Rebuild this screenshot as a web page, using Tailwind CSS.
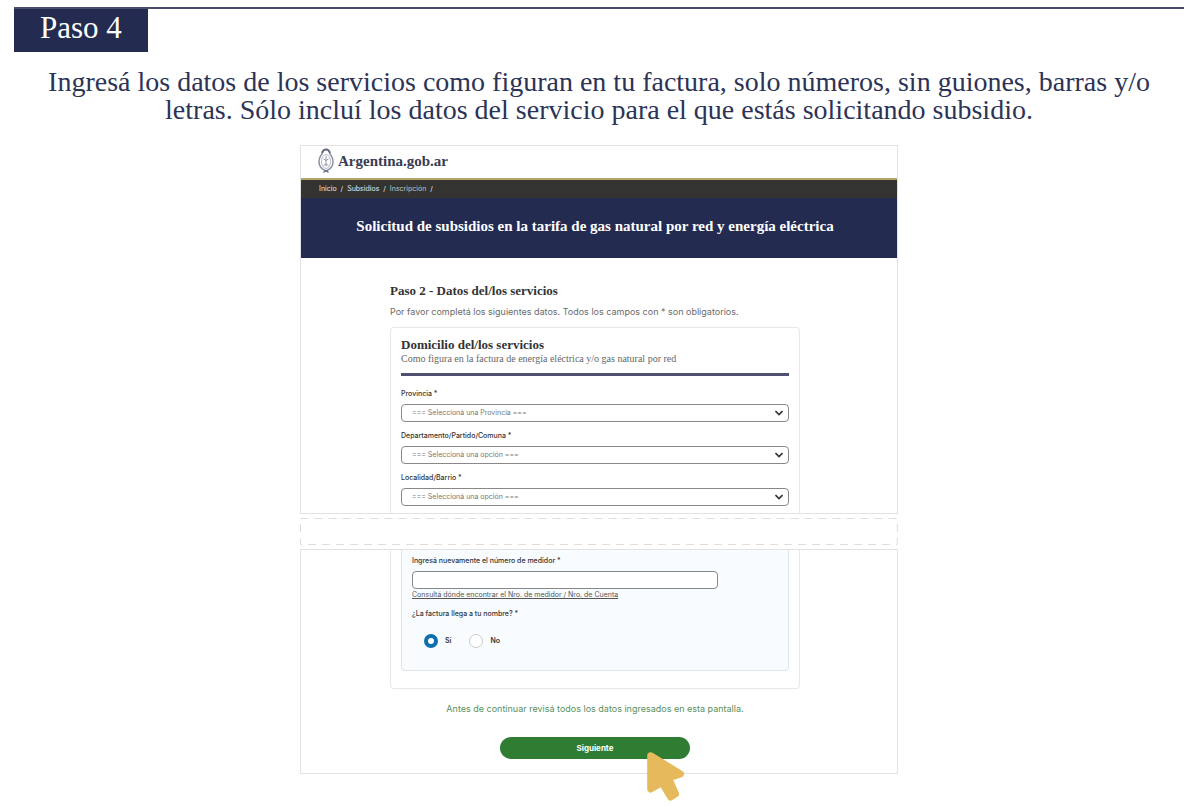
<!DOCTYPE html>
<html lang="es">
    <head>
        <meta charset="UTF-8">
        <meta name="viewport" content="width=device-width, initial-scale=1.0">
        <title>Paso 4 - Datos de los servicios</title>
        <script src="https://cdn.jsdelivr.net/npm/@tailwindcss/browser@4"></script>
    </head>
    <body class="min-h-screen bg-white pt-[7px] pb-8 pl-3.5 pr-4 font-['Inter','Open_Sans',sans-serif] text-[#333333]">

        <!-- Encabezado del paso -->
        <header class="border-t-2 border-[#4a4d6b] font-['Liberation_Serif',serif]">
            <h1 class="inline-block bg-[#232b51] px-[26px] pt-[3px] pb-2 text-[31px] leading-8 text-white align-top">Paso 4</h1>
            <p class="mt-4 text-center text-[28px] leading-7 text-[#2c3356]">
                Ingresá los datos de los servicios como figuran en tu factura, solo números, sin guiones, barras y/o<br>
                letras. Sólo incluí los datos del servicio para el que estás solicitando subsidio.
            </p>
        </header>

        <main class="mx-auto mt-[21px] max-w-[598px]">
            <form>
                <!-- Primera parte de la pantalla -->
                <section class="border border-[#e2e2e2]">
                    <div class="flex h-8 items-center gap-1 pb-0.5 pl-[17px]">
                        <svg class="h-[26px] w-4" viewBox="0 0 16 26" fill="none" stroke="#8b8fa6">
                            <path d="M4 5.500C4.500 3 6 1.500 8 1.500s3.500 1.500 4 4" stroke="#63687f" stroke-width="2"/>
                            <path d="M4.500 5.500C2 8 1 10.500 1 14c0 4 2.500 7 7 9 4.500-2 7-5 7-9 0-3.500-1-6-3.500-8.500" stroke-width="1.500"/>
                            <ellipse cx="8" cy="13.500" rx="4.500" ry="7" stroke-width="0.600"/>
                            <path d="M8 8v10.500M5.500 11L8 12.500l2.500-1.500M5.500 17.500L8 16l2.500 1.500" stroke-width="0.900"/>
                            <path d="M5.500 24.500L8 22.500l2.500 2" stroke="#63687f" stroke-width="1.300"/>
                        </svg>
                        <a href="#" class="font-['Liberation_Serif',serif] text-[15px] leading-5 font-bold text-[#383c52]">Argentina.gob.ar</a>
                    </div>
                    <nav class="flex h-5 items-center gap-1 border-t-2 border-[#b5a368] bg-[#333331] pl-[18px] text-[7px] leading-3 text-[#e8e8e8]">
                        <a href="#">Inicio</a><span>/</span>
                        <a href="#">Subsidios</a><span>/</span>
                        <a href="#" class="text-[#c4c4c4]">Inscripción</a><span>/</span>
                    </nav>
                    <div class="bg-[#232b51] pt-[18px] pr-2 pb-[22px]">
                        <h2 class="text-center font-['Liberation_Serif',serif] text-[15px] leading-5 font-bold text-white">Solicitud de subsidios en la tarifa de gas natural por red y energía eléctrica</h2>
                    </div>

                    <div class="pt-[25px] pr-2">
                        <div class="mx-auto max-w-[410px]">
                            <h3 class="font-['Liberation_Serif',serif] text-[13px] leading-4 font-bold">Paso 2 - Datos del/los servicios</h3>
                            <p class="mt-[5px] text-[9px] leading-4 text-[#6b6b6b]">Por favor completá los siguientes datos. Todos los campos con * son obligatorios.</p>
                            <div class="mt-[7px] rounded-t border border-b-0 border-[#e8e8e8] px-2.5 pt-[9px] pb-[7px]">
                                <h4 class="font-['Liberation_Serif',serif] text-[13px] leading-4 font-bold">Domicilio del/los servicios</h4>
                                <p class="border-b-3 border-[#4e5070] pb-2 font-['Liberation_Serif',serif] text-[10px] leading-3 text-[#666666]">Como figura en la factura de energía eléctrica y/o gas natural por red</p>

                                <div class="mt-3 flex flex-col gap-2">
                                    <div class="flex flex-col gap-1">
                                        <label for="provincia" class="text-[7px] leading-3 font-medium">Provincia *</label>
                                        <div class="relative">
                                            <select id="provincia" class="block h-[18px] w-full appearance-none rounded border border-[#888888] bg-white pl-2.5 text-[7px] leading-3 text-[#777777]">
                                                <option>=== Seleccioná una Provincia ===</option>
                                            </select>
                                            <svg class="pointer-events-none absolute top-1.5 right-1.5 h-1.5 w-2" viewBox="0 0 8 6" fill="none" stroke="#333333" stroke-width="1.600"><path d="M0.500 1L4 4.500 7.500 1"/></svg>
                                        </div>
                                    </div>
                                    <div class="flex flex-col gap-1">
                                        <label for="departamento" class="text-[7px] leading-3 font-medium">Departamento/Partido/Comuna *</label>
                                        <div class="relative">
                                            <select id="departamento" class="block h-[18px] w-full appearance-none rounded border border-[#888888] bg-white pl-2.5 text-[7px] leading-3 text-[#777777]">
                                                <option>=== Seleccioná una opción ===</option>
                                            </select>
                                            <svg class="pointer-events-none absolute top-1.5 right-1.5 h-1.5 w-2" viewBox="0 0 8 6" fill="none" stroke="#333333" stroke-width="1.600"><path d="M0.500 1L4 4.500 7.500 1"/></svg>
                                        </div>
                                    </div>
                                    <div class="flex flex-col gap-1">
                                        <label for="localidad" class="text-[7px] leading-3 font-medium">Localidad/Barrio *</label>
                                        <div class="relative">
                                            <select id="localidad" class="block h-[18px] w-full appearance-none rounded border border-[#888888] bg-white pl-2.5 text-[7px] leading-3 text-[#777777]">
                                                <option>=== Seleccioná una opción ===</option>
                                            </select>
                                            <svg class="pointer-events-none absolute top-1.5 right-1.5 h-1.5 w-2" viewBox="0 0 8 6" fill="none" stroke="#333333" stroke-width="1.600"><path d="M0.500 1L4 4.500 7.500 1"/></svg>
                                        </div>
                                    </div>
                                </div>
                            </div>
                        </div>
                    </div>
                </section>

                <!-- Corte entre las dos partes -->
                <svg class="my-1 block h-[27px] w-full" fill="none" stroke="#dddddd" stroke-dasharray="8 6">
                    <rect x="0.500" y="0.500" width="99.800%" height="26"/>
                </svg>

                <!-- Segunda parte de la pantalla -->
                <section class="border border-[#e2e2e2] pr-2 pb-3.5">
                    <div class="mx-auto max-w-[410px] rounded-b border border-t-0 border-[#e8e8e8] px-2.5 pb-[17px]">
                        <div class="rounded-b border border-t-0 border-[#dfe5e9] bg-[#f8fcff] px-2.5 pt-[5px] pb-[22px]">
                            <label for="medidor" class="block text-[7px] leading-3 font-medium">Ingresá nuevamente el número de medidor *</label>
                            <input id="medidor" type="text" class="mt-1 block h-[18px] w-full max-w-[306px] rounded border border-[#888888] bg-white px-2 text-[7px]">
                            <a href="#" class="block text-[7px] leading-3 text-[#555555] underline">Consultá dónde encontrar el Nro. de medidor / Nro. de Cuenta</a>
                            <fieldset>
                                <legend class="pt-[7px] text-[7px] leading-3 font-medium">¿La factura llega a tu nombre? *</legend>
                                <div class="mt-3.5 flex gap-[18px] pl-3">
                                    <label class="flex items-center gap-[7px] text-[7px] leading-3 font-semibold">
                                        <input type="radio" name="titular" value="si" checked class="size-3.5 appearance-none rounded-full border border-[#cccccc] bg-white checked:border-4 checked:border-[#0f6fae]">
                                        Sí
                                    </label>
                                    <label class="flex items-center gap-[7px] text-[7px] leading-3 font-semibold">
                                        <input type="radio" name="titular" value="no" class="size-3.5 appearance-none rounded-full border border-[#cccccc] bg-white checked:border-4 checked:border-[#0f6fae]">
                                        No
                                    </label>
                                </div>
                            </fieldset>
                        </div>
                    </div>
                    <p class="mt-3 text-center text-[9px] leading-4 text-[#5a8f5c]">Antes de continuar revisá todos los datos ingresados en esta pantalla.</p>
                    <div class="relative mx-auto mt-5 w-[190px]">
                        <button type="button" class="block h-[22px] w-full rounded-full bg-[#2e7d33] text-[8px] leading-3 font-bold text-white">Siguiente</button>
                        <svg class="pointer-events-none absolute top-3.5 left-[146px] h-[50px] w-10 overflow-visible" viewBox="0 0 40 50" fill="#e6b95c" stroke="#e6b95c" stroke-width="7" stroke-linejoin="round">
                            <path d="M4.700 4.700L34.500 23 22.500 27 29.500 43 24.500 46 16 31.500 4.700 38Z"/>
                        </svg>
                    </div>
                </section>
            </form>
        </main>
    </body>
</html>
